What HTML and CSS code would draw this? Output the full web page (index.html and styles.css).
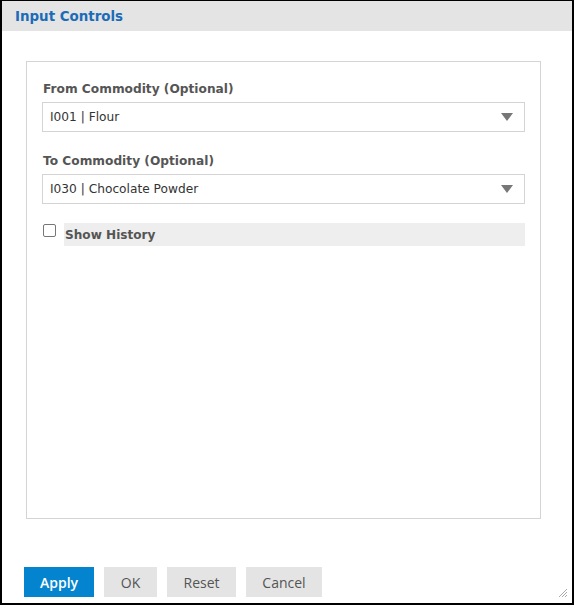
FILE: index.html
```html
<!DOCTYPE html>
<html>
<head>
<meta charset="utf-8">
<link rel="stylesheet" href="styles.css">
</head>
<body>
<div class="window">
  <div class="header">Input Controls</div>
  <div class="content">
    <div class="panel">
      <div class="field">
        <div class="label">From Commodity (Optional)</div>
        <div class="select"><span>I001 | Flour</span><span class="caret"></span></div>
      </div>
      <div class="field">
        <div class="label">To Commodity (Optional)</div>
        <div class="select"><span>I030 | Chocolate Powder</span><span class="caret"></span></div>
      </div>
      <div class="check-row">
        <span class="checkbox"></span>
        <div class="check-label">Show History</div>
      </div>
    </div>
  </div>
  <div class="footer">
    <button class="btn primary">Apply</button>
    <button class="btn">OK</button>
    <button class="btn">Reset</button>
    <button class="btn">Cancel</button>
  </div>
  <svg class="grip" width="10" height="10" viewBox="0 0 10 10">
    <path d="M9 1L1 9M9 4L4 9M9 7L7 9" stroke="#aaa" stroke-width="1"/>
  </svg>
</div>
</body>
</html>
```
FILE: styles.css
```css
html, body { margin: 0; padding: 0; background: #fff; }
.window {
  position: relative;
  width: 574px;
  height: 605px;
  box-sizing: border-box;
  border-style: solid;
  border-color: #000;
  border-width: 1px 2px 2px 2px;
  background: #fff;
  display: flex;
  flex-direction: column;
  font-family: "DejaVu Sans", Verdana, sans-serif;
}
.header {
  height: 30px;
  background: #e4e4e4;
  color: #1a6bb8;
  font-weight: bold;
  font-size: 13.4px;
  line-height: 31px;
  padding-left: 13px;
}
.content {
  padding: 30px 31px 0 24px;
}
.panel {
  box-sizing: border-box;
  border: 1px solid #d4d4d4;
  height: 458px;
  padding: 19px 15px 0 15px;
  display: flex;
  flex-direction: column;
}
.field { margin-bottom: 21px; }
.field + .field { margin-bottom: 19px; }
.label {
  color: #555;
  font-weight: bold;
  font-size: 12.2px;
  line-height: 16px;
  margin-bottom: 5px;
  padding-left: 1px;
}
.select {
  box-sizing: border-box;
  border: 1px solid #d4d4d4;
  height: 30px;
  display: flex;
  align-items: center;
  justify-content: space-between;
  padding: 0 11px 0 7px;
  font-size: 12.2px;
  color: #333;
}
.caret {
  width: 0; height: 0;
  border-left: 6px solid transparent;
  border-right: 6px solid transparent;
  border-top: 8px solid #777;
}
.check-row {
  display: flex;
  align-items: flex-start;
}
.checkbox {
  width: 11px; height: 11px;
  border: 1px solid #767676;
  border-radius: 2px;
  margin: 1px 8px 0 1px;
  background: #fff;
}
.check-label {
  flex: 1;
  background: #eeeeee;
  height: 23px;
  line-height: 24px;
  color: #555;
  font-weight: bold;
  font-size: 12.1px;
  padding-left: 1px;
}
.footer {
  display: flex;
  gap: 10px;
  padding: 48px 0 0 22px;
}
.btn {
  height: 30px;
  border: none;
  background: #e4e4e4;
  color: #555;
  font-family: "Open Sans", "Fira Sans", sans-serif;
  font-size: 14px;
  padding: 0;
}
.btn:nth-child(2) { width: 53px; }
.btn:nth-child(3) { width: 69px; }
.btn:nth-child(4) { width: 76px; }
.btn.primary { width: 70px; background: #0484ce; color: #fff; font-weight: 600; }
.grip { position: absolute; right: 4px; bottom: 5px; }
```
